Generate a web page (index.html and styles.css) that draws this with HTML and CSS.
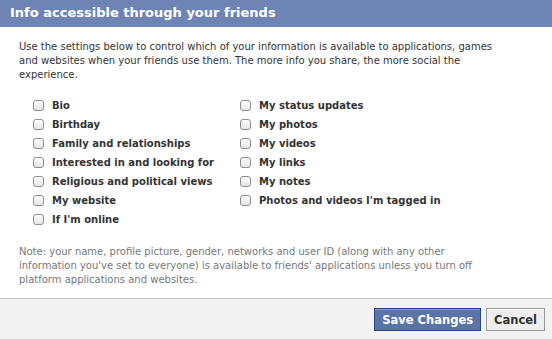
FILE: index.html
```html
<!DOCTYPE html>
<html lang="en">

<head>
  <meta charset="UTF-8" />
  <title>Info accessible through your friends</title>
  <link rel="stylesheet" href="styles.css">
</head>

<body>
  <div class="dialog">
    <h2 class="dialog-title">Info accessible through your friends</h2>

    <div class="dialog-body">
      <p class="intro">
        Use the settings below to control which of your information is available to applications, games
        and websites when your friends use them. The more info you share, the more social the experience.
      </p>

      <div class="options">
        <ul class="option-list">
          <li><label><input type="checkbox"> Bio</label></li>
          <li><label><input type="checkbox"> Birthday</label></li>
          <li><label><input type="checkbox"> Family and relationships</label></li>
          <li><label><input type="checkbox"> Interested in and looking for</label></li>
          <li><label><input type="checkbox"> Religious and political views</label></li>
          <li><label><input type="checkbox"> My website</label></li>
          <li><label><input type="checkbox"> If I'm online</label></li>
        </ul>
        <ul class="option-list">
          <li><label><input type="checkbox"> My status updates</label></li>
          <li><label><input type="checkbox"> My photos</label></li>
          <li><label><input type="checkbox"> My videos</label></li>
          <li><label><input type="checkbox"> My links</label></li>
          <li><label><input type="checkbox"> My notes</label></li>
          <li><label><input type="checkbox"> Photos and videos I'm tagged in</label></li>
        </ul>
      </div>

      <p class="note">
        Note: your name, profile picture, gender, networks and user ID (along with any other
        information you've set to everyone) is available to friends' applications unless you turn off
        platform applications and websites.
      </p>
    </div>

    <div class="dialog-footer">
      <button class="btn btn-primary">Save Changes</button>
      <button class="btn">Cancel</button>
    </div>
  </div>
</body>

</html>
```

FILE: styles.css
```css
* {
  box-sizing: border-box;
}

body {
  margin: 0;
  background: #fff;
  font-family: 'DejaVu Sans', 'Lucida Grande', sans-serif;
  font-size: 10px;
  line-height: 14px;
  color: #333;
}

.dialog {
  width: 552px;
  height: 339px;
  overflow: hidden;
}

.dialog-title {
  margin: 0;
  height: 27px;
  padding: 0 10px;
  background: #6d84b4;
  color: #fff;
  font-size: 13px;
  font-weight: bold;
  line-height: 26px;
}

.dialog-body {
  padding: 13px 19px 11px;
}

.intro,
.note {
  margin: 0;
  width: 481px;
}

.note {
  color: #777;
}

.options {
  display: flex;
  margin: 14px 0 16px 14px;
}

.option-list {
  list-style: none;
  margin: 0;
  padding: 0;
  width: 207px;
}

.option-list li {
  height: 19px;
}

.option-list label {
  display: flex;
  align-items: center;
  gap: 8px;
  height: 19px;
  font-weight: bold;
  white-space: nowrap;
}

.option-list input {
  appearance: none;
  -webkit-appearance: none;
  margin: 0;
  width: 11px;
  height: 11px;
  border: 1px solid #8d8d8d;
  border-radius: 3px;
  background: linear-gradient(#fdfdfd, #e6e6e6);
  box-shadow: inset 0 1px 0 #fff;
}

.dialog-footer {
  display: flex;
  justify-content: flex-end;
  gap: 5px;
  height: 60px;
  padding: 9px 7px 0;
  border-top: 1px solid #c9c9c9;
  background: #f2f2f2;
}

.btn {
  height: 23px;
  padding: 0 7px;
  border: 1px solid #999;
  background: #eee;
  color: #333;
  font-family: 'DejaVu Sans', 'Lucida Grande', sans-serif;
  font-size: 11.5px;
  font-weight: bold;
  box-shadow: inset 0 1px 0 #fff;
}

.btn-primary {
  border-color: #29447e;
  background: #5b74a8;
  color: #fff;
  box-shadow: inset 0 1px 0 #8a9cc2;
}
```
